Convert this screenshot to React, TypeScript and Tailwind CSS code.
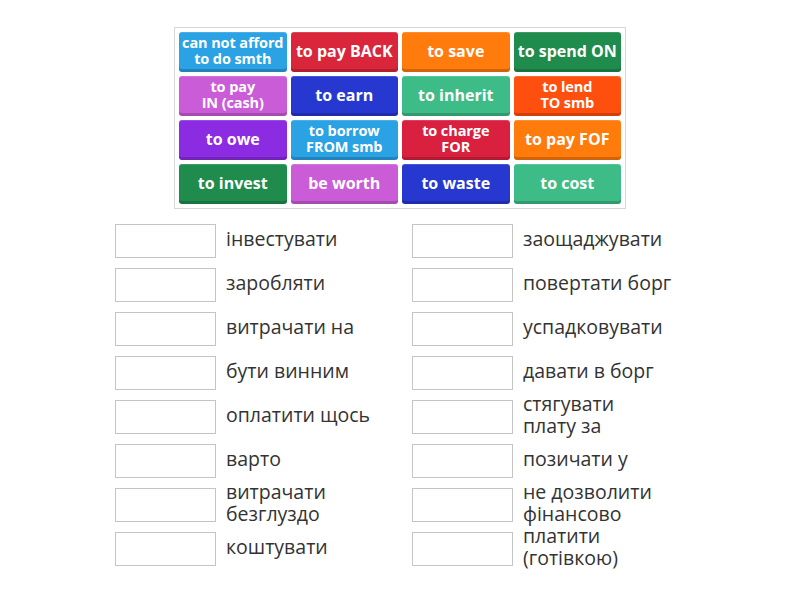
import React from "react";

const tiles: { t: string[]; c: string }[] = [
  { t: ["can not afford", "to do smth"], c: "bg-[#2ba2e4]" },
  { t: ["to pay BACK"], c: "bg-[#d9263b]" },
  { t: ["to save"], c: "bg-[#ff7b0c]" },
  { t: ["to spend ON"], c: "bg-[#1f8b4d]" },
  { t: ["to pay", "IN (cash)"], c: "bg-[#cb5cd8]" },
  { t: ["to earn"], c: "bg-[#2638d0]" },
  { t: ["to inherit"], c: "bg-[#3dbc87]" },
  { t: ["to lend", "TO smb"], c: "bg-[#ff4f0e]" },
  { t: ["to owe"], c: "bg-[#8b2ce2]" },
  { t: ["to borrow", "FROM smb"], c: "bg-[#2ba2e4]" },
  { t: ["to charge", "FOR"], c: "bg-[#d9213f]" },
  { t: ["to pay FOF"], c: "bg-[#ff7b0c]" },
  { t: ["to invest"], c: "bg-[#1f8b4d]" },
  { t: ["be worth"], c: "bg-[#cb5cd8]" },
  { t: ["to waste"], c: "bg-[#2638d0]" },
  { t: ["to cost"], c: "bg-[#3dbc87]" },
];

const left: string[][] = [
  ["інвестувати"],
  ["заробляти"],
  ["витрачати на"],
  ["бути винним"],
  ["оплатити щось"],
  ["варто"],
  ["витрачати", "безглуздо"],
  ["коштувати"],
];
const right: string[][] = [
  ["заощаджувати"],
  ["повертати борг"],
  ["успадковувати"],
  ["давати в борг"],
  ["стягувати", "плату за"],
  ["позичати у"],
  ["не дозволити", "фінансово"],
  ["платити", "(готівкою)"],
];

function Lines({ lines }: { lines: string[] }) {
  return (
    <>
      {lines.map((l, i) => (
        <React.Fragment key={i}>
          {i > 0 && <br />}
          {l}
        </React.Fragment>
      ))}
    </>
  );
}

function Row({ label }: { label: string[] }) {
  return (
    <div className="flex items-center h-[34px] gap-[10px]">
      <div className="w-[101px] h-[34px] border border-[#c4c4c4] bg-white shrink-0" />
      <p className="w-[160px] text-[19.5px] leading-[22px] text-[#333333] -mt-[5px] whitespace-nowrap">
        <Lines lines={label} />
      </p>
    </div>
  );
}

export default function App() {
  return (
    <div
      className="w-[800px] h-[600px] bg-white relative"
      style={{ fontFamily: '"Open Sans", "Noto Sans", sans-serif' }}
    >
      <div className="pt-[27px] flex justify-center">
        <div className="w-[452px] border border-[#d6d6d6] p-[4px] bg-white">
          <div className="grid grid-cols-4 gap-[4px]">
            {tiles.map((x, i) => (
              <div
                key={i}
                className={`${x.c} h-[40px] rounded-[3px] flex items-center justify-center text-center text-white font-bold shadow-[inset_0_-3px_0_rgba(0,0,0,0.18),inset_0_1px_0_rgba(255,255,255,0.15)] whitespace-nowrap ${
                  x.t.length > 1 ? "text-[14.5px] leading-[16px] tracking-[-0.1px] pb-[2px]" : "text-[16px] leading-[18px] pb-[2px]"
                }`}
              >
                <p>
                  <Lines lines={x.t} />
                </p>
              </div>
            ))}
          </div>
        </div>
      </div>
      <div className="flex mt-[15px] pl-[115px] gap-[26px]">
        <div className="flex flex-col gap-[10px]">
          {left.map((l, i) => (
            <Row key={i} label={l} />
          ))}
        </div>
        <div className="flex flex-col gap-[10px]">
          {right.map((l, i) => (
            <Row key={i} label={l} />
          ))}
        </div>
      </div>
    </div>
  );
}
